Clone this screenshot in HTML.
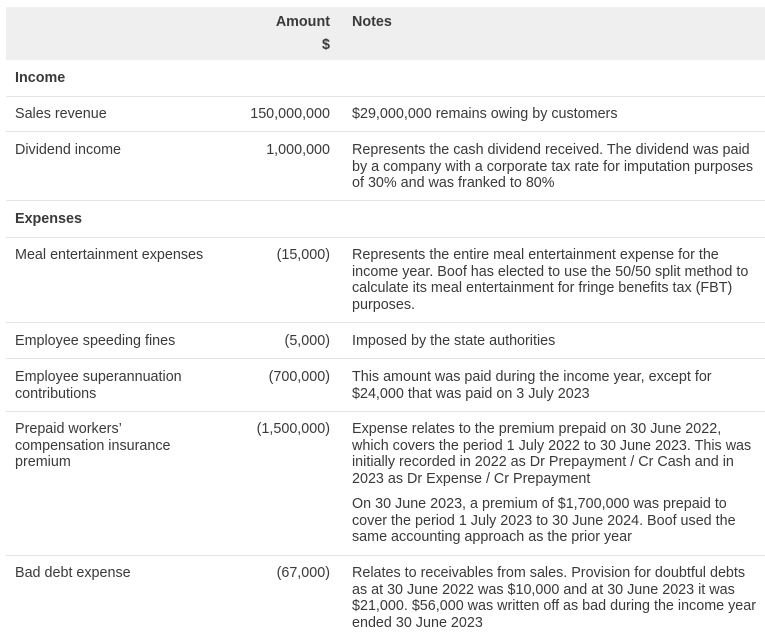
<!DOCTYPE html>
<html><head><style>
body{margin:0;width:765px;height:639px;background:#fff;font-family:"Liberation Sans",Arial,sans-serif;font-size:14.35px;color:#3a3a3a;position:relative;overflow:hidden}
.t{position:absolute;line-height:16.6px;white-space:nowrap;margin-top:1px}
.b{font-weight:bold}
.r{text-align:right;width:200px;left:130px}
.n{left:352px}
.l{left:15px}
.hr{position:absolute;left:6px;right:0;height:1px;background:#e4e4e4}
</style></head><body>
<div style="position:absolute;left:6px;top:7px;right:0;height:53px;background:#efefef"></div>
<div class="t b r" style="top:13px">Amount</div>
<div class="t b r" style="top:36px">$</div>
<div class="t b n" style="top:13px">Notes</div>

<div class="t b l" style="top:69px">Income</div>
<div class="hr" style="top:96px"></div>
<div class="t l" style="top:105px">Sales revenue</div>
<div class="t r" style="top:105px">150,000,000</div>
<div class="t n" style="top:105px">$29,000,000 remains owing by customers</div>
<div class="hr" style="top:131px"></div>
<div class="t l" style="top:141px">Dividend income</div>
<div class="t r" style="top:141px">1,000,000</div>
<div class="t n" style="top:141px">Represents the cash dividend received. The dividend was paid<br>by a company with a corporate tax rate for imputation purposes<br>of 30% and was franked to 80%</div>
<div class="hr" style="top:200px"></div>
<div class="t b l" style="top:210px">Expenses</div>
<div class="hr" style="top:237px"></div>
<div class="t l" style="top:246px">Meal entertainment expenses</div>
<div class="t r" style="top:246px">(15,000)</div>
<div class="t n" style="top:246px">Represents the entire meal entertainment expense for the<br>income year. Boof has elected to use the 50/50 split method to<br>calculate its meal entertainment for fringe benefits tax (FBT)<br>purposes.</div>
<div class="hr" style="top:322px"></div>
<div class="t l" style="top:332px">Employee speeding fines</div>
<div class="t r" style="top:332px">(5,000)</div>
<div class="t n" style="top:332px">Imposed by the state authorities</div>
<div class="hr" style="top:358px"></div>
<div class="t l" style="top:368px">Employee superannuation<br>contributions</div>
<div class="t r" style="top:368px">(700,000)</div>
<div class="t n" style="top:368px">This amount was paid during the income year, except for<br>$24,000 that was paid on 3 July 2023</div>
<div class="hr" style="top:411px"></div>
<div class="t l" style="top:420px">Prepaid workers’<br>compensation insurance<br>premium</div>
<div class="t r" style="top:420px">(1,500,000)</div>
<div class="t n" style="top:420px">Expense relates to the premium prepaid on 30 June 2022,<br>which covers the period 1 July 2022 to 30 June 2023. This was<br>initially recorded in 2022 as Dr Prepayment / Cr Cash and in<br>2023 as Dr Expense / Cr Prepayment</div>
<div class="t n" style="top:495px">On 30 June 2023, a premium of $1,700,000 was prepaid to<br>cover the period 1 July 2023 to 30 June 2024. Boof used the<br>same accounting approach as the prior year</div>
<div class="hr" style="top:555px"></div>
<div class="t l" style="top:564px">Bad debt expense</div>
<div class="t r" style="top:564px">(67,000)</div>
<div class="t n" style="top:564px">Relates to receivables from sales. Provision for doubtful debts<br>as at 30 June 2022 was $10,000 and at 30 June 2023 it was<br>$21,000. $56,000 was written off as bad during the income year<br>ended 30 June 2023</div>
</body></html>
